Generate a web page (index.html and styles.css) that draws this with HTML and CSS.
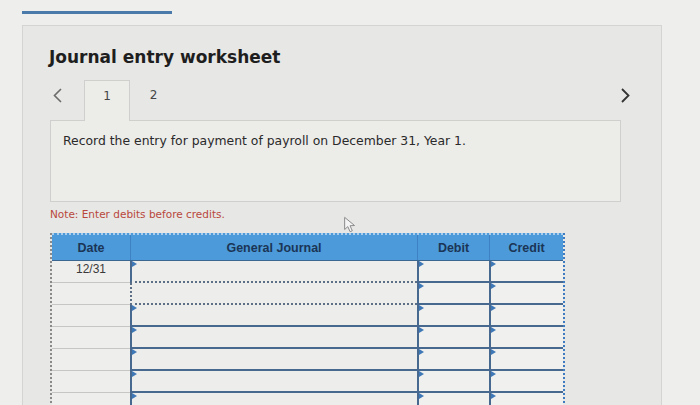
FILE: index.html
```html
<!DOCTYPE html>
<html>
<head>
<meta charset="utf-8">
<link rel="stylesheet" href="styles.css">
</head>
<body>
<div class="topline"></div>
<div class="panel">
  <h1 class="title">Journal entry worksheet</h1>
  <div class="tabs">
    <span class="chev chev-left"><svg width="9" height="15" viewBox="0 0 9 15"><path d="M8 1 L1.5 7.5 L8 14" fill="none" stroke="#6b6b6b" stroke-width="1.6"/></svg></span>
    <span class="tab tab-active">1</span>
    <span class="tab">2</span>
    <span class="chev chev-right"><svg width="9" height="15" viewBox="0 0 9 15"><path d="M1 1 L7.5 7.5 L1 14" fill="none" stroke="#333" stroke-width="1.8"/></svg></span>
  </div>
  <div class="question">Record the entry for payment of payroll on December 31, Year 1.</div>
  <p class="note">Note: Enter debits before credits.</p>
  <div class="journal">
    <div class="head">
      <div class="hcell">Date</div>
      <div class="hcell">General Journal</div>
      <div class="hcell">Debit</div>
      <div class="hcell">Credit</div>
    </div>
    <div class="row">
      <div class="cell date">12/31</div>
      <div class="cell acct first"><i class="mark"></i></div>
      <div class="cell num"><i class="mark"></i></div>
      <div class="cell num last"><i class="mark"></i></div>
    </div>
    <div class="row">
      <div class="cell date"></div>
      <div class="cell acct focus"></div>
      <div class="cell num"><i class="mark"></i></div>
      <div class="cell num last"><i class="mark"></i></div>
    </div>
    <div class="row">
      <div class="cell date"></div>
      <div class="cell acct"><i class="mark"></i></div>
      <div class="cell num"><i class="mark"></i></div>
      <div class="cell num last"><i class="mark"></i></div>
    </div>
    <div class="row">
      <div class="cell date"></div>
      <div class="cell acct"><i class="mark"></i></div>
      <div class="cell num"><i class="mark"></i></div>
      <div class="cell num last"><i class="mark"></i></div>
    </div>
    <div class="row">
      <div class="cell date"></div>
      <div class="cell acct"><i class="mark"></i></div>
      <div class="cell num"><i class="mark"></i></div>
      <div class="cell num last"><i class="mark"></i></div>
    </div>
    <div class="row">
      <div class="cell date"></div>
      <div class="cell acct"><i class="mark"></i></div>
      <div class="cell num"><i class="mark"></i></div>
      <div class="cell num last"><i class="mark"></i></div>
    </div>
    <div class="row">
      <div class="cell date"></div>
      <div class="cell acct"><i class="mark"></i></div>
      <div class="cell num"><i class="mark"></i></div>
      <div class="cell num last"><i class="mark"></i></div>
    </div>
    <svg class="cursor" width="15" height="18" viewBox="0 0 16 20"><path d="M1.5 1.5 L1.5 15 L5 11.8 L7.6 17.5 L10 16.4 L7.5 10.8 L12.5 10.6 Z" fill="#f4f4f4" stroke="#8a8a8a" stroke-width="1.1" stroke-linejoin="round"/></svg>
  </div>
</div>
</body>
</html>
```
FILE: styles.css
```css
html, body {
  margin: 0;
  padding: 0;
}
body {
  width: 700px;
  height: 405px;
  overflow: hidden;
  background: #eeeeec;
  font-family: "DejaVu Sans", Verdana, sans-serif;
  color: #222;
}
.topline {
  margin: 11px 0 0 22px;
  width: 150px;
  height: 3px;
  background: #4a7aa9;
}
.panel {
  margin: 11px 0 0 22px;
  width: 612px;
  height: 400px;
  padding: 0 0 0 26px;
  background: #e7e7e5;
  border: 1px solid #d4d4d2;
  border-bottom: none;
}
.title {
  margin: 0;
  padding-top: 20px;
  font-size: 17px;
  line-height: 22px;
  font-weight: bold;
  color: #1e1e1e;
}
.tabs {
  display: flex;
  align-items: flex-end;
  height: 40px;
  margin-top: 12px;
  position: relative;
  z-index: 1;
}
.chev {
  display: flex;
  align-items: center;
  height: 30px;
  align-self: flex-start;
}
.chev-left {
  width: 31px;
  padding-left: 4px;
}
.chev-right {
  margin-left: auto;
  margin-right: 31px;
}
.tab {
  width: 47px;
  height: 40px;
  display: flex;
  justify-content: center;
  padding-top: 8px;
  font-size: 12px;
  line-height: 14px;
  color: #444;
  box-sizing: border-box;
}
.tab-active {
  width: 46px;
  background: #ecece9;
  border: 1px solid #cfcfcd;
  border-bottom: none;
  height: 41px;
  margin-bottom: -1px;
}
.question {
  margin-left: 1px;
  width: 545px;
  height: 58px;
  padding: 12px 12px 10px;
  background: #ecece9;
  border: 1px solid #cfcfcd;
  font-size: 12.4px;
  line-height: 16px;
  color: #2a2a2a;
}
.note {
  margin: 5px 0 0 1px;
  font-size: 10.5px;
  line-height: 14px;
  color: #b9473d;
}
.journal {
  position: relative;
  margin: 12px 0 0 1px;
  width: 511px;
  font-family: "Liberation Sans", Arial, sans-serif;
  border-left: 2px dotted #8a8a8a;
  border-right: 2px dotted #3d7cc0;
}
.head {
  display: grid;
  grid-template-columns: 78px 287px 72px 74px;
  height: 25px;
  background: #4c9ad9;
  border-top: 2px dotted #a9cdeb;
  border-bottom: 1px solid #3b6690;
}
.hcell {
  display: flex;
  align-items: center;
  justify-content: center;
  font-size: 12.5px;
  font-weight: bold;
  color: #1b3556;
  border-left: 1px solid #3f82c4;
}
.hcell:first-child {
  border-left: none;
}
.row {
  display: grid;
  grid-template-columns: 78px 287px 72px 74px;
  height: 22px;
}
.cell {
  position: relative;
  box-sizing: border-box;
}
.date {
  background: #eeeeec;
  border-bottom: 1px solid #c6c6c4;
  font-size: 12px;
  color: #3a3a3a;
  text-align: center;
  line-height: 14px;
  padding-top: 1px;
}
.acct {
  background: #ededeb;
  border-left: 2px solid #47698f;
  border-bottom: 2px solid #47698f;
}
.acct.first {
  border-bottom: 2px dotted #5b6f86;
}
.acct.focus {
  border-left: 2px dotted #5b6f86;
  border-bottom: 2px dotted #5b6f86;
}
.num {
  background: #f0f0ee;
  border-left: 2px solid #47698f;
  border-bottom: 2px solid #47698f;
}
.mark {
  position: absolute;
  left: 0;
  top: 0;
  width: 0;
  height: 0;
  border-top: 3px solid transparent;
  border-bottom: 3px solid transparent;
  border-left: 5px solid #3f78b6;
}
.cursor {
  position: absolute;
  left: 291px;
  top: -17px;
}
```
